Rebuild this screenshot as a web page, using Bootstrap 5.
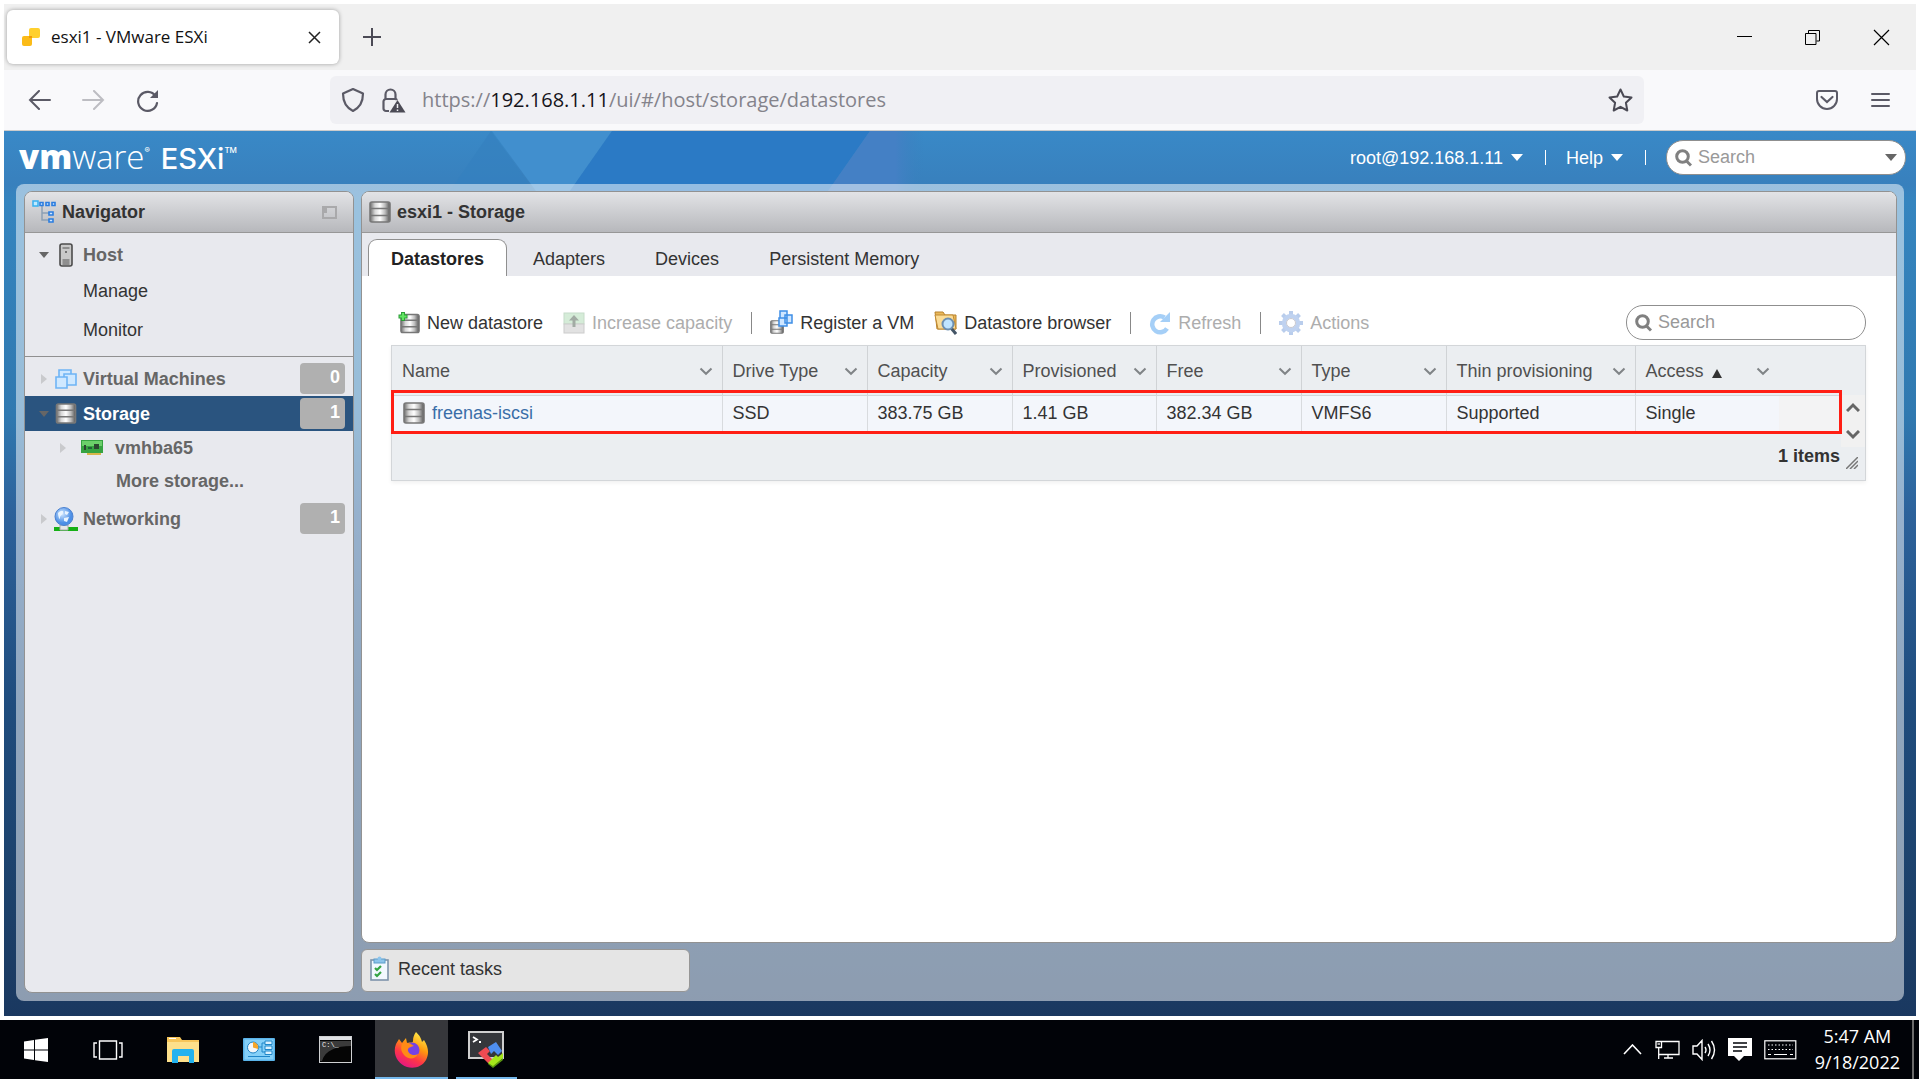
<!DOCTYPE html>
<html lang="en">
<head>
<meta charset="utf-8">
<meta name="viewport" content="width=device-width, initial-scale=1">
<title>esxi1 - VMware ESXi</title>
<link rel="stylesheet" href="https://cdn.jsdelivr.net/npm/bootstrap@5.3.0/dist/css/bootstrap.min.css">
<style>
body{font-family:"Liberation Sans",Arial,sans-serif;font-size:18px;line-height:24px;color:#333;background:#fff}
svg{display:block;flex:none}
a,a:hover{text-decoration:none}
button{font:inherit;color:inherit;background:none;border:0;padding:0}
.ui-font{font-family:"Open Sans","Noto Sans",sans-serif}
.win{margin:4px 3px 4px 4px}
.tabstrip{background:#f0f0f0;height:66px;padding:6px 26px 6px 3px}
.btab{width:332px;border-radius:6px;background:#fff;box-shadow:0 0 4px rgba(0,0,0,.35);padding:0 18px 0 15px;font-size:17px;color:#111}
.btab-title{padding-left:11px}
.newtab{margin-left:24px}
.wctl{gap:53px}
.toolbar{background:#f9f9fb;height:61px;padding:6px 26px 6px 24px;border-bottom:1px solid #ccc;color:#4b4a55}
.nav-btns{gap:31px;width:302px}
.urlbar{background:#f0f0f4;border-radius:6px;padding:0 11px;height:48px;gap:16px}
.urltext{font-size:20px;line-height:28px;color:#84838b}
.urltext b{font-weight:400;color:#15141a}
.tb-right{width:246px;gap:33px}
.app{background:linear-gradient(#3989c7 0,#3880bd 6%,#3585bf 8%,#3079b0 32%,#2d629b 43%,#1f4c7d 65%,#1c4069 88%,#1a3860 100%);padding:0 12px 15px}
.deco{left:0;top:0;z-index:0}
.apphead{height:53px;color:#fff;padding-left:3px;margin-right:-2px}
.logo{font-family:"Open Sans","Noto Sans",sans-serif;font-size:33px;line-height:40px;font-weight:300}
.logo b{font-weight:800}
.logo .prod{font-family:Inter,sans-serif;font-weight:500;font-size:29px;margin-left:11px}
.logo sup{font-family:Inter,sans-serif;font-size:8px;top:-16px;font-weight:500}
.vbar{width:1px;height:15px;background:#fff;margin:0 20px 0 22px}
.caretd{width:0;height:0;border:6px solid transparent;border-top:7px solid currentColor;border-bottom:0}
.caretd.dim{color:#666}
.pill{background:#fff;border:1px solid #8f8f8f;border-radius:17px;height:35px;padding:0 8px;color:#777;width:240px}
.pill input{border:0;outline:0;background:none;color:#333;min-width:0;height:30px;line-height:24px;padding:0 0 0 6px}
.pill input::placeholder{color:#999;opacity:1}
.frame{background:rgba(255,255,255,.5);border-radius:8px;padding:7px 7px 8px 8px;gap:7px}
.pane{border:1px solid #929292;border-radius:8px;overflow:hidden}
.pane-h{height:41px;background:linear-gradient(#e2e3e6,#b7b8bc);border-bottom:1px solid #979797;font-weight:700;gap:6px;padding:0 8px 0 7px}
.navpane{width:330px;background:#e8e9ee}
.navrow{height:35px;color:#666;font-weight:700;padding:0 8px 0 13px}
.navrow.top{height:33px}
.navrow.subrow{height:33px;padding-left:32px}
.navrow.leaf{height:39px;color:#333;font-weight:400;padding-left:58px}
.navrow.more{padding-left:91px}
.navrow.active{background:#2a547f;color:#fff}
.tw{width:11px;display:flex;justify-content:center;margin-right:5px}
.tw.open::before{content:"";border:5px solid transparent;border-top:6px solid #666;border-bottom:0}
.tw.shut::before{content:"";border:5px solid transparent;border-left:6px solid #c9cacd;border-right:0}
.ico{width:24px;display:flex;justify-content:center;margin-right:5px}
.subrow .ico{margin:0 11px 0 7px}
.cnt{width:45px;height:31px;line-height:29px;border-radius:4px;background:#b0b0b0;color:#fff;text-align:right;padding-right:5px}
.hostgrp{border-bottom:1px solid #909090;padding:5px 0 7px}
.othergrp{padding-top:4px}
.work{gap:6px}
.mainpane{background:#fff}
.tabsrow{background:#e8e9ee;height:43px;padding:6px 6px 0;gap:2px;border:0}
.tabsrow .nav-link{color:#333;border:0;border-radius:9px 9px 0 0;padding:0 24px;height:37px;line-height:40px}
.tabsrow .nav-link.active{background:#fff;color:#222;font-weight:700;border:1px solid #8f8f8f;border-bottom:0;padding:0 22px;line-height:38px}
.content{padding:29px 30px 0 29px}
.acts{gap:20px;padding-left:7px}
.acts button{display:flex;align-items:center;gap:7px;white-space:nowrap}
.acts button:disabled{color:#adadad}
.sep{width:1px;height:22px;background:#888;margin:0 -2px 0 -1px}
.gridbox{border:1px solid #d3d6d9;background:#ebeef1;margin-top:5px;height:136px;box-shadow:0 2px 4px rgba(0,0,0,.06)}
.ds{table-layout:fixed;width:100%;border-collapse:collapse}
.ds th{height:49px;font-weight:400;color:#505050;padding:2px 9px 0 10px;border-right:1px solid #d0d3d6;border-bottom:1px solid #d3d6d9;white-space:nowrap}
.ds td{height:36px;background:#f3f6fb;padding:0 10px 1px;border-right:1px solid #d8dbde;white-space:nowrap}
.ds .open-end{border-right:0}
.ds td.fill{background:#f3f3f4}
.ds a{color:#3a6ea8;gap:7px}
.ds .first{padding-left:11px}
.c-name{width:330px}.c-std{width:145px}.c-slim{width:144px}.c-thin{width:189px}
.mark-box{left:-1px;right:23px;top:44px;height:44px;border:3px solid #ff1e14;pointer-events:none}
.scroller{right:0;top:49px;width:24px;height:52px;background:#f1f1f1;color:#666;padding:7px 0}
.gridfoot{font-weight:700;padding:13px 7px 0 0;gap:6px}
.gridfoot svg{margin-top:13px}
.recent{width:329px;height:43px;background:#e5e5e5;border:1px solid #969696;border-radius:6px;padding:0 0 4px 8px;margin-bottom:1px}
.taskbar{background:#010308;height:59px;color:#fff;padding-left:24px}
.tile{height:59px;display:flex;align-items:center;justify-content:center}
.tile.run{border-bottom:2px solid #76b9ed;padding-top:2px}
.tile.cur{background:#36373b;width:73px;margin-left:23px}
.tile.next{width:61px;margin-left:8px}
.gap-task{margin-left:44px}
.tray{gap:12px}
.clock{font-size:18px;line-height:26px;text-align:center;padding-bottom:2px;margin-left:6px}
.peek{width:2px;height:59px;background:#6b6b6b;margin-right:5px}
</style>
<script src="https://cdn.jsdelivr.net/npm/bootstrap@5.3.0/dist/js/bootstrap.bundle.min.js"></script>
</head>
<body class="d-flex flex-column min-vh-100">
<svg width="0" height="0" class="position-absolute" aria-hidden="true">
<defs>
<linearGradient id="metal" x1="0" x2="1"><stop offset="0" stop-color="#6d6d6d"/><stop offset=".25" stop-color="#d8d8d8"/><stop offset=".5" stop-color="#fff"/><stop offset=".75" stop-color="#bdbdbd"/><stop offset="1" stop-color="#555"/></linearGradient>
<linearGradient id="fx" x1=".8" y1="0" x2=".3" y2="1"><stop offset="0" stop-color="#fff44f"/><stop offset=".4" stop-color="#ff980e"/><stop offset=".7" stop-color="#ff3647"/><stop offset="1" stop-color="#e31587"/></linearGradient>
<radialGradient id="globe" cx=".4" cy=".35"><stop offset="0" stop-color="#cfe6ff"/><stop offset="1" stop-color="#4d8fe6"/></radialGradient>
<symbol id="ds" viewBox="0 0 22 22"><rect x="1" y="1" width="20" height="20" rx="2" fill="url(#metal)" stroke="#777" stroke-width="1.6"/><path d="M2 7.500h18M2 14.500h18" stroke="#777" stroke-width="1.6"/></symbol>
<symbol id="chev" viewBox="0 0 14 9"><path d="M1.500 1.500 7 6.800l5.500-5.300" fill="none" stroke="currentColor" stroke-width="2"/></symbol>
<symbol id="mag" viewBox="0 0 17 18"><circle cx="7.500" cy="7.500" r="5.800" fill="none" stroke="#808080" stroke-width="3"/><path d="m11 11.500 5 5" stroke="#808080" stroke-width="3"/></symbol>
</defs></svg>

<div class="win d-flex flex-column flex-grow-1">
  <header class="tabstrip ui-font d-flex align-items-stretch">
    <div class="btab d-flex align-items-center">
      <svg width="18" height="18"><rect x="7" y="0" width="11" height="10" rx="2" fill="#ffd02e"/><rect x="0" y="8" width="10" height="10" rx="2" fill="#fbbb18"/><rect x="7" y="8" width="3" height="2" fill="#f09a0a"/></svg>
      <span class="btab-title flex-grow-1">esxi1 - VMware ESXi</span>
      <button aria-label="Close tab"><svg width="13" height="13" stroke="#222" stroke-width="1.500"><path d="m1 1 11 11M12 1 1 12"/></svg></button>
    </div>
    <button class="newtab" aria-label="New tab"><svg width="18" height="18" stroke="#4b4a55" stroke-width="2"><path d="M9 0v18M0 9h18"/></svg></button>
    <div class="wctl d-flex align-items-center ms-auto">
      <button aria-label="Minimize"><svg width="16" height="16" stroke="#000"><path d="M1 7.500h15"/></svg></button>
      <button aria-label="Restore"><svg width="15" height="15" fill="none" stroke="#000"><path d="M.5 3.500h10.500v11H.5zM3.500 3.500v-3h11v10.500H11.500"/></svg></button>
      <button aria-label="Close"><svg width="17" height="17" stroke="#000" stroke-width="1.200"><path d="m1 1 15 15M16 1 1 16"/></svg></button>
    </div>
  </header>
  <div class="toolbar ui-font d-flex align-items-center">
    <div class="nav-btns d-flex align-items-center">
      <button aria-label="Back"><svg width="23" height="20" fill="none" stroke="#5b5a66" stroke-width="2"><path d="M22 10H2M11 1 2 10l9 9" stroke-linecap="round"/></svg></button>
      <button aria-label="Forward"><svg width="23" height="20" fill="none" stroke="#bdbdc2" stroke-width="2"><path d="M1 10h20M12 1l9 9-9 9" stroke-linecap="round"/></svg></button>
      <button aria-label="Reload"><svg width="23" height="23" fill="none" stroke="#5b5a66" stroke-width="2.200"><path d="M19.500 7A9.500 9.500 0 1 0 21 14" stroke-linecap="round"/><path d="M22 1v8h-8z" fill="#5b5a66" stroke="none"/></svg></button>
    </div>
    <div class="urlbar d-flex align-items-center flex-grow-1">
      <svg width="24" height="26" fill="none" stroke="#5b5a66" stroke-width="2.200" stroke-linejoin="round"><path d="M12 2 22 6.500c0 9-3 14-10 17.500C5 20.500 2 15.500 2 6.500z"/></svg>
      <svg width="25" height="26" fill="none" stroke="#5b5a66" stroke-width="2.200"><path d="M4.500 12V7.500a5 5 0 0 1 10 0V12M8 24H5a2.500 2.500 0 0 1-2.500-2.500v-7A2.500 2.500 0 0 1 5 12h9a2 2 0 0 1 2 1"/><path d="M16.500 13 24.500 25.500h-16z" fill="#4b4a55" stroke="none"/><path d="M16.500 17v4M16.500 22.500v1.500" stroke="#f0f0f4" stroke-width="1.500"/></svg>
      <span class="urltext flex-grow-1">https://<b>192.168.1.11</b>/ui/#/host/storage/datastores</span>
      <button aria-label="Bookmark"><svg width="25" height="25" fill="none" stroke="#4b4a55" stroke-width="2" stroke-linejoin="round"><path d="m12.500 1.500 3.300 7 7.700 1-5.600 5.300 1.400 7.700-6.800-3.700-6.800 3.700 1.400-7.700L1.500 9.500l7.700-1z"/></svg></button>
    </div>
    <div class="tb-right d-flex align-items-center justify-content-end">
      <button aria-label="Save to Pocket"><svg width="22" height="20" fill="none" stroke="#5b5a66" stroke-width="2"><path d="M3 1h16a2 2 0 0 1 2 2v6a10 10 0 0 1-20 0V3a2 2 0 0 1 2-2z"/><path d="m5.500 7 5.500 5 5.500-5" stroke-width="2.200" stroke-linecap="round"/></svg></button>
      <button aria-label="Menu"><svg width="19" height="16" stroke="#5b5a66" stroke-width="2" stroke-linecap="round"><path d="M1 2h17M1 8h17M1 14h17"/></svg></button>
    </div>
  </div>

  <main class="app position-relative d-flex flex-column flex-grow-1">
    <svg class="deco position-absolute" width="960" height="60" aria-hidden="true"><defs><linearGradient id="vio" x1="0" x2="1"><stop offset="0" stop-color="#4480c5"/><stop offset=".7" stop-color="#4480c5"/><stop offset="1" stop-color="#3880bd" stop-opacity="0"/></linearGradient></defs><path d="M487 0 530 60h-84z" fill="#3580bf" opacity=".7"/><path d="M488 0h120l-42 60h-34z" fill="#418fce"/><path d="M608 0h258l-42 60H566z" fill="#2b7ac5"/><path d="M866 0h54v60h-96z" fill="url(#vio)"/></svg>
    <div class="apphead d-flex align-items-center position-relative">
      <div class="logo flex-grow-1"><b>vm</b>ware<sup>®</sup><span class="prod">ESXi</span><sup>TM</sup></div>
      <button class="d-flex align-items-center gap-2">root@192.168.1.11 <span class="caretd"></span></button>
      <span class="vbar"></span>
      <button class="d-flex align-items-center gap-2">Help <span class="caretd"></span></button>
      <span class="vbar"></span>
      <div class="pill d-flex align-items-center">
        <label for="topsearch"><svg width="17" height="18" role="img" aria-label="Search"><use href="#mag"/></svg></label>
        <input id="topsearch" class="flex-grow-1" type="text" placeholder="Search">
        <button class="caretd dim" aria-label="Search options"></button>
      </div>
    </div>

    <div class="frame d-flex flex-grow-1 position-relative">
      <nav class="navpane pane d-flex flex-column flex-shrink-0" aria-label="Navigator">
        <div class="pane-h d-flex align-items-center">
          <svg width="24" height="24" fill="none"><path d="M10 5v15h7M10 13h7" stroke="#8ca0b5" stroke-width="1.500"/><rect x="1" y="1" width="5" height="5" fill="#bfeaff" stroke="#37b0f0" stroke-width="1.500"/><path d="M8 2.500h3v3H8zM14 2.500h3v3h-3zM20 2.500h3v3h-3zM17 12h4v3h-4zM17 19h4v3h-4z" fill="#d0e6ff" stroke="#2b7de0" stroke-width="1.600"/></svg>
          <span class="flex-grow-1">Navigator</span>
          <button class="me-2" aria-label="Minimize navigator"><svg width="15" height="13" fill="none" stroke="#a9a9ab" stroke-width="2"><path d="M1 1h13v11H1z"/><path d="M1 1h4v6H1z" fill="#a9a9ab" stroke="none"/></svg></button>
        </div>
        <div class="hostgrp">
          <a href="#" class="navrow top d-flex align-items-center"><span class="tw open"></span><span class="ico"><svg width="14" height="24"><rect x="1" y="1" width="12" height="22" rx="2" fill="#c9c9c9" stroke="#4c4c4c" stroke-width="1.600"/><path d="M3.500 5h7M3.500 17h7M3.500 19h7M3.500 21h7" stroke="#555"/><circle cx="7" cy="9" r="1" fill="#555"/></svg></span>Host</a>
          <a href="#" class="navrow leaf d-flex align-items-center">Manage</a>
          <a href="#" class="navrow leaf d-flex align-items-center">Monitor</a>
        </div>
        <div class="othergrp">
          <a href="#" class="navrow d-flex align-items-center"><span class="tw shut"></span><span class="ico"><svg width="22" height="20" fill="#cfe8ff" stroke="#6fb4f5" stroke-width="1.600"><path d="M4 1h12v10H4z"/><path d="M9 5h12v11H9z"/><path d="M1 8h11v11H1z"/></svg></span>Virtual Machines<span class="cnt ms-auto">0</span></a>
          <a href="#" class="navrow active d-flex align-items-center"><span class="tw open"></span><span class="ico"><svg width="22" height="21"><use href="#ds"/></svg></span>Storage<span class="cnt ms-auto">1</span></a>
          <a href="#" class="navrow subrow d-flex align-items-center"><span class="tw shut"></span><span class="ico"><svg width="22" height="16"><rect width="22" height="13" fill="#36a341"/><rect x="1" y="1" width="20" height="5" fill="#6bcf6a"/><path d="M6 13h14v2H6z" fill="#d8b64a"/><path d="M3 5h2v5H3zM13 4h5v5h-5z" fill="#2c4631"/><path d="M7 8h4" stroke="#123"/></svg></span>vmhba65</a>
          <a href="#" class="navrow subrow more d-flex align-items-center">More storage...</a>
          <a href="#" class="navrow d-flex align-items-center mt-1"><span class="tw shut"></span><span class="ico"><svg width="24" height="24"><path d="M0 20h24v4H0z" fill="#16b016"/><path d="M6 18h8v5H6z" fill="#e6e6e6" stroke="#aaa"/><circle cx="10" cy="9.500" r="9" fill="url(#globe)" stroke="#4a80d0"/><path d="M4 6c3-3 6-3 5 0s-3 2-3 5-2-2-2-5zM11 4l4 1-2 3-2-1zM10 11l5-1-2 5-3-1z" fill="#e9f4ff"/></svg></span>Networking<span class="cnt ms-auto">1</span></a>
        </div>
      </nav>

      <div class="work d-flex flex-column flex-grow-1">
        <section class="mainpane pane flex-grow-1">
          <div class="pane-h d-flex align-items-center"><svg width="22" height="22"><use href="#ds"/></svg>esxi1 - Storage</div>
          <ul class="nav nav-tabs tabsrow">
            <li class="nav-item"><a class="nav-link active" href="#">Datastores</a></li>
            <li class="nav-item"><a class="nav-link" href="#">Adapters</a></li>
            <li class="nav-item"><a class="nav-link" href="#">Devices</a></li>
            <li class="nav-item"><a class="nav-link" href="#">Persistent Memory</a></li>
          </ul>
          <div class="content">
            <div class="d-flex align-items-center justify-content-between">
              <div class="acts d-flex align-items-center">
                <button><svg width="22" height="24"><svg x="2" y="2" width="20" height="21"><use href="#ds"/></svg><path d="M5 1v9M.5 5.500h9" stroke="#2d9c38" stroke-width="4"/><path d="M5 2v7M1.500 5.500h7" stroke="#62e562" stroke-width="2.200"/></svg>New datastore</button>
                <button disabled><svg width="22" height="24"><rect x="1" y="2" width="20" height="11" fill="#d5ecd8" stroke="#c6dcc9"/><rect x="1" y="13" width="20" height="9" fill="#e2e2e2" stroke="#ccc"/><path d="M11 4 6 9.500h3.500V16h3V9.500H16z" fill="#a2aba4"/></svg>Increase capacity</button>
                <span class="sep"></span>
                <button><svg width="23" height="25"><svg x="0" y="9" width="14" height="16"><use href="#ds"/></svg><path d="M10 1h7v7h-7zM15 5h7v8h-7zM9 8h8v8H9z" fill="#cfe6ff" stroke="#3f8fe6" stroke-width="1.500"/></svg>Register a VM</button>
                <button><svg width="23" height="25"><path d="M1 2h8l2 3h11v14H3z" fill="#e9b85a" stroke="#b8812a"/><path d="M1 5h18l3 14H4z" fill="#fbdc96" stroke="#c08a33"/><path d="m17 18 5 6" stroke="#456" stroke-width="3"/><circle cx="14" cy="14" r="5.500" fill="#bfe4ff" stroke="#6d8fb0" stroke-width="2"/></svg>Datastore browser</button>
                <span class="sep"></span>
                <button disabled><svg width="22" height="24" fill="none"><path d="M18 17.500A8 8 0 1 1 15.500 6.500" stroke="#a5cff7" stroke-width="4.500"/><path d="M21 1v10H11z" fill="#a5cff7"/></svg>Refresh</button>
                <span class="sep"></span>
                <button disabled><svg width="24" height="24"><path d="M12 0v24M0 12h24M3.500 3.500l17 17M20.500 3.500l-17 17" stroke="#b9cdec" stroke-width="4"/><circle cx="12" cy="12" r="7" fill="#fff" stroke="#bfd2f0" stroke-width="4.500"/><circle cx="12" cy="12" r="4.500" fill="none" stroke="#c9c9cf"/></svg>Actions</button>
              </div>
              <div class="pill d-flex align-items-center">
                <label for="gridsearch"><svg width="17" height="18" role="img" aria-label="Search"><use href="#mag"/></svg></label>
                <input id="gridsearch" class="flex-grow-1" type="text" placeholder="Search">
              </div>
            </div>
            <div class="gridbox position-relative">
              <table class="ds">
                <colgroup><col class="c-name"><col class="c-std"><col class="c-std"><col class="c-slim"><col class="c-std"><col class="c-std"><col class="c-thin"><col class="c-slim"><col></colgroup>
                <thead><tr>
                  <th><div class="d-flex align-items-center justify-content-between">Name<svg width="14" height="9" color="#808487"><use href="#chev"/></svg></div></th>
                  <th><div class="d-flex align-items-center justify-content-between">Drive Type<svg width="14" height="9" color="#808487"><use href="#chev"/></svg></div></th>
                  <th><div class="d-flex align-items-center justify-content-between">Capacity<svg width="14" height="9" color="#808487"><use href="#chev"/></svg></div></th>
                  <th><div class="d-flex align-items-center justify-content-between">Provisioned<svg width="14" height="9" color="#808487"><use href="#chev"/></svg></div></th>
                  <th><div class="d-flex align-items-center justify-content-between">Free<svg width="14" height="9" color="#808487"><use href="#chev"/></svg></div></th>
                  <th><div class="d-flex align-items-center justify-content-between">Type<svg width="14" height="9" color="#808487"><use href="#chev"/></svg></div></th>
                  <th><div class="d-flex align-items-center justify-content-between">Thin provisioning<svg width="14" height="9" color="#808487"><use href="#chev"/></svg></div></th>
                  <th class="open-end"><div class="d-flex align-items-center">Access<svg class="ms-2 mt-1" width="10" height="9"><path d="M5 0l5 9H0z" fill="#333"/></svg><svg class="ms-auto" width="14" height="9" color="#808487"><use href="#chev"/></svg></div></th>
                  <th class="open-end"></th>
                </tr></thead>
                <tbody><tr>
                  <td class="first"><a href="#" class="d-flex align-items-center"><svg width="22" height="22"><use href="#ds"/></svg>freenas-iscsi</a></td>
                  <td>SSD</td><td>383.75 GB</td><td>1.41 GB</td><td>382.34 GB</td><td>VMFS6</td><td>Supported</td><td class="open-end">Single</td><td class="open-end fill"></td>
                </tr></tbody>
              </table>
              <div class="scroller position-absolute d-flex flex-column align-items-center justify-content-between">
                <button aria-label="Scroll up"><svg width="14" height="10" fill="none" stroke="#666" stroke-width="3"><path d="m1 9 6-6 6 6"/></svg></button>
                <button aria-label="Scroll down"><svg width="14" height="10" fill="none" stroke="#666" stroke-width="3"><path d="m1 1 6 6 6-6"/></svg></button>
              </div>
              <div class="mark-box position-absolute"></div>
              <div class="gridfoot d-flex justify-content-end align-items-start"><span>1 items</span><svg width="12" height="12" stroke="#777" stroke-width="1.500"><path d="M0 12 12 0M4 12l8-8M8 12l4-4"/></svg></div>
            </div>
          </div>
        </section>
        <button class="recent d-flex align-items-center gap-2"><svg width="20" height="25"><rect x="1" y="4" width="17" height="20" fill="#f2f8ff" stroke="#7d93ab" stroke-width="1.600"/><rect x="4" y="3" width="11" height="4" fill="#8cc4ec" stroke="#5b9cc9"/><circle cx="9.500" cy="2.500" r="2" fill="#8cc4ec"/><path d="m5 12 2 2 4-4M5 18l2 2 4-4" fill="none" stroke="#34a344" stroke-width="2.200"/></svg>Recent tasks</button>
      </div>
    </div>
  </main>
</div>

<footer class="taskbar ui-font d-flex align-items-center">
  <button aria-label="Start"><svg width="24" height="24" fill="#fff"><path d="M0 3.500 10 2v9.500H0zM11 1.800 24 0v11.500H11zM0 12.500h10V22L0 20.500zM11 12.500h13V24l-13-1.800z"/></svg></button>
  <button class="gap-task" aria-label="Task view"><svg width="31" height="20" fill="none" stroke="#fff" stroke-width="1.400"><path d="M7.500 1h17v18h-17zM5 3H2v14h3M27 3h3v14h-3"/></svg></button>
  <button class="gap-task" aria-label="File Explorer"><svg width="32" height="28"><path d="M0 1h13l2 3h17v22H0z" fill="#f7c65a"/><path d="M0 6h32v20H0z" fill="#fde08b"/><path d="M2 2.500h7" stroke="#fff"/><path d="M5 27V15q0-2 2-2h18q2 0 2 2v12h-5v-7H11v7z" fill="#22b2ee"/></svg></button>
  <button class="gap-task" aria-label="Control Panel"><svg width="32" height="23"><rect width="32" height="23" rx="1" fill="#5ab4ea"/><rect x="1.500" y="1.500" width="29" height="20" fill="#85d0f8"/><circle cx="10" cy="9.500" r="5.500" fill="#f4f7fa" stroke="#1d83c6"/><path d="M10 9.500V4a5.500 5.500 0 0 1 5 7z" fill="#f6a62a"/><path d="M22 3h7v3.500h-7zM22 8h7v3.500h-7zM22 13h7v3.500h-7z" fill="#d9f1ff" stroke="#1f86c9"/><path d="M16 9h3V5h3M19 9v5h3M5 18.500h22" stroke="#1f86c9" fill="none"/></svg></button>
  <button class="gap-task" aria-label="Command Prompt"><svg width="33" height="27"><rect x=".5" y=".5" width="32" height="26" fill="#050505" stroke="#cfd1d3"/><path d="M1 1h31v3H1z" fill="#dfe2e6"/><path d="M1 5h31v5C18 10 6 14 3 25H1z" fill="#3a3a3a"/><text x="3" y="11" font-size="7" fill="#eee" font-family="Liberation Mono,monospace">C:\_</text></svg></button>
  <button class="tile cur run" aria-label="Firefox"><svg width="35" height="36" viewBox="0 0 35 36"><path d="M22 0c4 4 5 6 6 10l2-2c5 8 5 14 2 20-4 7-12 9-19 7C4 32-2 22 2 12l3-5 3 4 4-5 1 5c4-1 6 0 6-2 0-4 1-6 3-9z" fill="url(#fx)"/><circle cx="18" cy="18" r="7.500" fill="#7542e5"/><path d="M8 12c5-3 9 0 12 2-3 1-5 1-6 3-1 4 5 8 10 5-2 5-9 6-13 2-3-3-5-7-3-12z" fill="#ff8a16"/></svg></button>
  <button class="tile run next" aria-label="MobaXterm"><svg width="37" height="37"><rect x="1" y="1" width="34" height="26" fill="#35373b" stroke="#cfcfcf" stroke-width="2"/><path d="m5 6 4 2.500-4 2.500M11 11h2" stroke="#fff" stroke-width="1.800" fill="none"/><path d="m10 22 8-6 4 4-3 3 6 6-4 4z" fill="#ee4b52"/><path d="m20 16 8-5 6 9-4 4-4-4-3 3z" fill="#4f8ff0"/><path d="m35 22v5L25 36l-5-4 8-8 2 2z" fill="#a6e81a"/><path d="m20 32 5 3 10-8v2l-10 8-5-4z" fill="#5c9a10"/></svg></button>
  <div class="tray d-flex align-items-center ms-auto">
    <button aria-label="Hidden icons"><svg width="20" height="11" fill="none" stroke="#fff" stroke-width="1.600"><path d="m1 10 8.500-9 8.500 9"/></svg></button>
    <svg width="25" height="20" fill="none" stroke="#fff" stroke-width="1.300"><path d="M7 1.500h17v13H4M1 1.500h5.500v6H1zM3.700 7.500V19M13 14.500V18M9 18h9"/><path d="M2.500 4h2.500"/></svg>
    <svg width="24" height="22" fill="none" stroke="#fff" stroke-width="1.400"><path d="M1 7h4l5-5.500v19L5 15H1zM13 8q2 3 0 6M16 5q4 6 0 12M19.500 2q6 9 0 18"/></svg>
    <svg width="24" height="25"><path d="M0 1h24v18h-8l-5 5-5-5H0z" fill="#fff"/><path d="M5 6h14M5 10h14M5 14h9" stroke="#010308" stroke-width="1.300"/></svg>
    <svg width="33" height="20" fill="none" stroke="#fff" stroke-width="1.200"><rect x=".8" y=".8" width="31" height="18"/><path d="M4 5h25M4 9.500h25" stroke-dasharray="1.500 2"/><path d="M4 14.500h3M10 14.500h13M26 14.500h3"/></svg>
    <div class="clock">5:47 AM<br>9/18/2022</div>
    <span class="peek"></span>
  </div>
</footer>
</body>
</html>
